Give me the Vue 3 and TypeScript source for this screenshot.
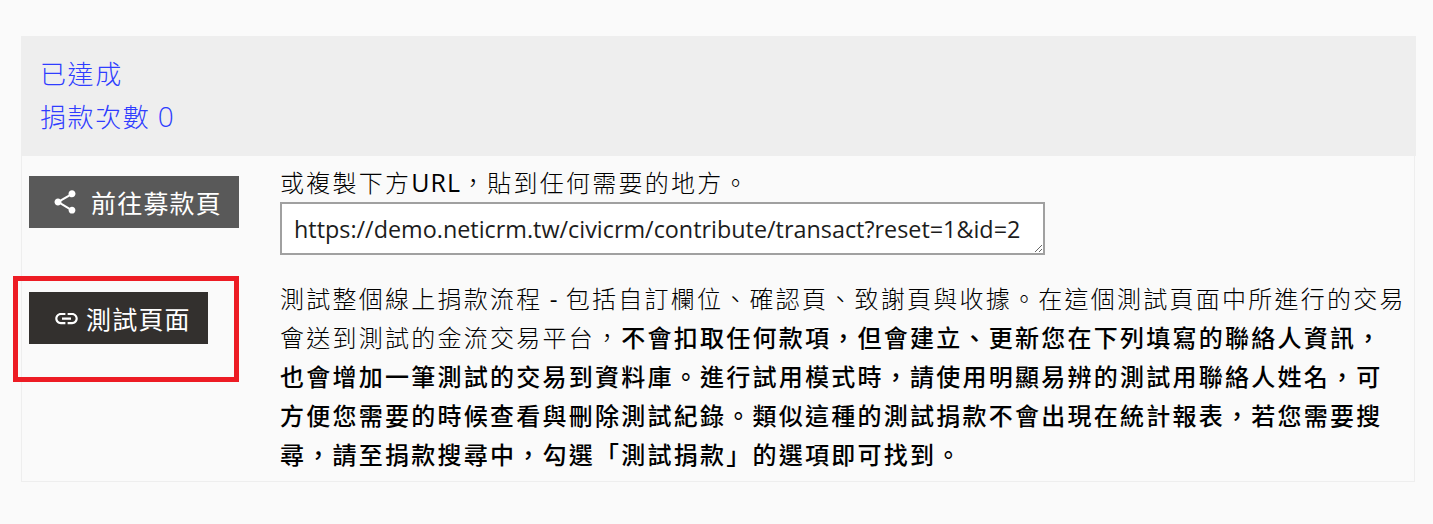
<script setup lang="ts">
const url = 'https://demo.neticrm.tw/civicrm/contribute/transact?reset=1&id=2'
</script>

<template>
  <div class="page" lang="zh-TW">
    <div class="panel">
      <div class="head">
        <div>已達成</div>
        <div>捐款次數 <span class="zero">0</span></div>
      </div>
      <div class="body">
        <div class="row first">
          <div class="side">
            <a class="btn share">
              <svg class="ico" viewBox="0 0 24 24" width="28" height="28"><path fill="#fff" d="M18 16.08c-.76 0-1.44.3-1.96.77L8.91 12.7c.05-.23.09-.46.09-.7s-.04-.47-.09-.7l7.05-4.11c.54.5 1.25.81 2.04.81 1.66 0 3-1.34 3-3s-1.34-3-3-3-3 1.34-3 3c0 .24.04.47.09.7L8.04 9.81C7.5 9.31 6.79 9 6 9c-1.66 0-3 1.34-3 3s1.34 3 3 3c.79 0 1.5-.31 2.04-.81l7.12 4.16c-.05.21-.08.43-.08.65 0 1.61 1.31 2.92 2.92 2.92 1.61 0 2.92-1.31 2.92-2.92s-1.31-2.92-2.92-2.92z"/></svg>
              <span class="lbl">前往募款頁</span>
            </a>
          </div>
          <div class="main">
            <div class="hint">或複製下方<span class="latin">URL</span>，貼到任何需要的地方。</div>
            <textarea class="url" readonly rows="1" :value="url"></textarea>
          </div>
        </div>
        <div class="row second">
          <div class="side">
            <a class="btn test">
              <svg class="ico" viewBox="0 0 24 24" width="27" height="27"><path fill="#fff" d="M3.9 12c0-1.71 1.39-3.1 3.1-3.1h4V7H7c-2.76 0-5 2.24-5 5s2.24 5 5 5h4v-1.9H7c-1.71 0-3.1-1.39-3.1-3.1zM8 13h8v-2H8v2zm9-6h-4v1.9h4c1.71 0 3.1 1.39 3.1 3.1s-1.39 3.1-3.1 3.1h-4V17h4c2.76 0 5-2.24 5-5s-2.24-5-5-5z"/></svg>
              <span class="lbl">測試頁面</span>
            </a>
          </div>
          <div class="main desc">測試整個線上捐款流程<span class="dash"> - </span>包括自訂欄位、確認頁、致謝頁與收據。在這個測試頁面中所進行的交易會送到測試的金流交易平台，<strong>不會扣取任何款項，但會建立、更新您在下列填寫的聯絡人資訊，也會增加一筆測試的交易到資料庫。進行試用模式時，請使用明顯易辨的測試用聯絡人姓名，可方便您需要的時候查看與刪除測試紀錄。類似這種的測試捐款不會出現在統計報表，若您需要搜尋，請至捐款搜尋中，勾選「測試捐款」的選項即可找到。</strong></div>
        </div>
      </div>
      <div class="mark"></div>
    </div>
  </div>
</template>

<style>
html, body { margin: 0; background: #fafafa; }
</style>

<style scoped>
.page {
  padding: 36px 17px 0 21px;
  height: 488px;
  font-family: "Open Sans", "Noto Sans CJK TC", sans-serif;
  font-size: 24px;
  letter-spacing: 2.25px;
  font-weight: 300;
  color: #000;
}
.panel { position: relative; }
.head {
  background: #eee;
  height: 120px;
  box-sizing: border-box;
  padding: 17px 19px 0;
  color: #2f3dff;
  line-height: 42px;
  font-size: 26px;
  letter-spacing: 1.6px;
}
.zero { font-size: 28px; letter-spacing: 0; margin-left: -1px; font-weight: 300; }
.body {
  margin-right: 1px;
  border: 1px solid #eee;
  border-top: 0;
  height: 326px;
  box-sizing: border-box;
}
.row { display: flex; }
.first { padding-top: 7px; height: 120px; box-sizing: border-box; }
.second { padding-top: 3px; }
.side { width: 259px; padding-left: 7px; box-sizing: border-box; flex: none; }
.first .side { padding-top: 13px; }
.second .side { padding-top: 13px; }
.btn {
  display: inline-flex;
  align-items: center;
  height: 52px;
  color: #fff;
  font-size: 25px;
  font-weight: 400;
  letter-spacing: 1.2px;
  box-sizing: border-box;
}
.share { background: #595959; width: 210px; padding-left: 22px; }
.test { background: #33302e; width: 179px; padding-left: 24px; }
.lbl { margin-left: 12px; white-space: nowrap; }
.test .lbl { margin-left: 6px; }
.main { flex: 1; min-width: 0; margin-left: -1px; padding-right: 7px; }
.latin { font-size: 25px; letter-spacing: 1px; font-weight: 400; }
.dash { letter-spacing: 1px; font-weight: 400; }
.hint { line-height: 38px; }
.url {
  display: block;
  width: 765px;
  height: 53px;
  box-sizing: border-box;
  border: 2px solid #a0a0a0;
  background: #fff;
  padding: 9px 12px;
  margin: 0;
  font: inherit;
  font-size: 23.36px;
  font-weight: 400;
  letter-spacing: 0;
  color: #1c1c1c;
  outline: 0;
  white-space: nowrap;
  overflow: hidden;
}
.desc { line-height: 39px; }
.desc strong { font-weight: 500; color: #000; }
.mark {
  position: absolute;
  left: -8px;
  top: 240px;
  width: 226px;
  height: 106px;
  box-sizing: border-box;
  border: 5px solid #ed1c24;
  pointer-events: none;
}
</style>
